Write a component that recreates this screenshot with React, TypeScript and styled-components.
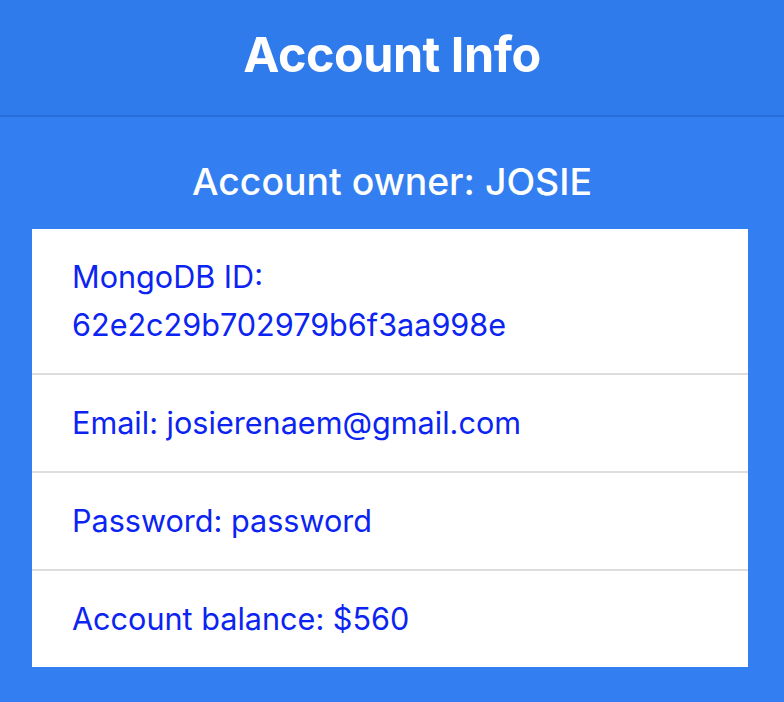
import * as React from "react";
import styled, { createGlobalStyle } from "styled-components";

const account = {
  owner: "JOSIE",
  id: "62e2c29b702979b6f3aa998e",
  email: "josierenaem@gmail.com",
  password: "password",
  balance: 560
};

const GlobalStyle = createGlobalStyle`
  html, body {
    margin: 0;
    padding: 0;
    background-color: #337ff2;
  }
  body {
    font-family: Inter, "Liberation Sans", sans-serif;
  }
`;

const App = () => {
  return (
    <Page>
      <GlobalStyle />
      <Header>
        <Title>Account Info</Title>
      </Header>
      <Owner>Account owner: {account.owner}</Owner>
      <InfoList>
        <InfoRow>
          MongoDB ID:
          <br />
          {account.id}
        </InfoRow>
        <InfoRow>Email: {account.email}</InfoRow>
        <InfoRow>Password: {account.password}</InfoRow>
        <InfoRow last>Account balance: ${account.balance}</InfoRow>
      </InfoList>
    </Page>
  );
};

const Page = styled.div`
  background-color: #337ff2;
  min-height: 702px;
  display: flex;
  flex-direction: column;
`;

const Header = styled.header`
  height: 117px;
  box-sizing: border-box;
  padding-bottom: 6px;
  background-color: #2f7bec;
  border-bottom: 2px solid #2a6fd8;
  display: flex;
  align-items: center;
  justify-content: center;
`;

const Title = styled.h1`
  margin: 0;
  color: white;
  font-size: 48.5px;
  font-weight: 700;
  line-height: 56px;
  letter-spacing: -0.5px;
`;

const Owner = styled.h2`
  margin: 41px 0 23px;
  color: white;
  text-align: center;
  font-size: 37.4px;
  font-weight: 500;
  line-height: 48px;
`;

const InfoList = styled.ul`
  list-style: none;
  margin: 0 36px 0 32px;
  padding: 0;
  background-color: white;
`;

const InfoRow = styled.li<{ last?: boolean }>`
  padding: 24px 40px;
  color: #0c24f2;
  font-size: 30.6px;
  line-height: 48px;
  border-bottom: ${(p) => (p.last ? "none" : "2px solid #dddddd")};
`;

export default App;
